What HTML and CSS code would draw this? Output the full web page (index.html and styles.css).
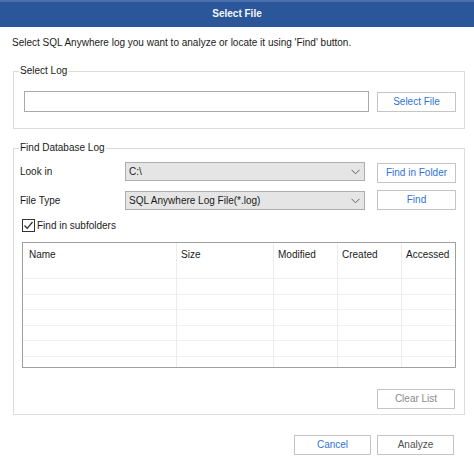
FILE: index.html
```html
<!DOCTYPE html>
<html>
<head>
<meta charset="utf-8">
<link rel="stylesheet" href="styles.css">
</head>
<body>
<div class="dialog">
  <div class="titlebar">Select File</div>
  <div class="intro">Select SQL Anywhere log you want to analyze or locate it using 'Find' button.</div>

  <fieldset class="group group-select">
    <legend>Select Log</legend>
    <div class="row-select">
      <div class="textbox"></div>
      <button class="btn btn-blue btn-select">Select File</button>
    </div>
  </fieldset>

  <fieldset class="group group-find">
    <legend>Find Database Log</legend>
    <div class="form-row row-look">
      <span class="form-label">Look in</span>
      <div class="combo"><span>C:\</span><svg class="chev" width="9" height="6" viewBox="0 0 9 6"><path d="M0.5 0.8 L4.5 4.8 L8.5 0.8" fill="none" stroke="#606060" stroke-width="1"/></svg></div>
      <button class="btn btn-blue btn-side">Find in Folder</button>
    </div>
    <div class="form-row row-type">
      <span class="form-label">File Type</span>
      <div class="combo"><span>SQL Anywhere Log File(*.log)</span><svg class="chev" width="9" height="6" viewBox="0 0 9 6"><path d="M0.5 0.8 L4.5 4.8 L8.5 0.8" fill="none" stroke="#606060" stroke-width="1"/></svg></div>
      <button class="btn btn-blue btn-side">Find</button>
    </div>
    <label class="check-row">
      <span class="checkbox"><svg width="11" height="11" viewBox="0 0 11 11"><path d="M1.5 5.5 L4.2 8.3 L9.5 2" fill="none" stroke="#333" stroke-width="1.3"/></svg></span>
      <span>Find in subfolders</span>
    </label>
    <div class="list">
      <div class="col col-name">
        <div class="head">Name</div>
        <div class="cell"></div><div class="cell"></div><div class="cell"></div><div class="cell"></div><div class="cell"></div><div class="cell"></div>
      </div>
      <div class="col col-size">
        <div class="head">Size</div>
        <div class="cell"></div><div class="cell"></div><div class="cell"></div><div class="cell"></div><div class="cell"></div><div class="cell"></div>
      </div>
      <div class="col col-mod">
        <div class="head">Modified</div>
        <div class="cell"></div><div class="cell"></div><div class="cell"></div><div class="cell"></div><div class="cell"></div><div class="cell"></div>
      </div>
      <div class="col col-cre">
        <div class="head">Created</div>
        <div class="cell"></div><div class="cell"></div><div class="cell"></div><div class="cell"></div><div class="cell"></div><div class="cell"></div>
      </div>
      <div class="col col-acc">
        <div class="head">Accessed</div>
        <div class="cell"></div><div class="cell"></div><div class="cell"></div><div class="cell"></div><div class="cell"></div><div class="cell"></div>
      </div>
    </div>
    <div class="clear-row">
      <button class="btn btn-gray">Clear List</button>
    </div>
  </fieldset>

  <div class="footer">
    <button class="btn btn-blue">Cancel</button>
    <button class="btn btn-dark">Analyze</button>
  </div>
</div>
</body>
</html>
```

FILE: styles.css
```css
* { box-sizing: border-box; }
html, body { margin: 0; padding: 0; background: #ffffff; }
body {
  width: 474px;
  height: 467px;
  overflow: hidden;
  font-family: "Liberation Sans", Arial, sans-serif;
  font-size: 10px;
  color: #1a1a1a;
}
.dialog { width: 474px; height: 467px; }

.titlebar {
  height: 27px;
  background: #2b579a;
  border-top: 2px solid #4a70ad;
  color: #f4f7fb;
  font-weight: bold;
  font-size: 10px;
  text-align: center;
  line-height: 24px;
}

.intro {
  margin: 8px 0 0 12px;
  line-height: 16px;
  height: 16px;
}

.group {
  margin: 0 9px 0 13px;
  border: 1px solid #dcdcdc;
  padding: 0;
  min-width: 0;
}
.group legend {
  padding: 0 1px;
  line-height: 14px;
  color: #1a1a1a;
}

.group-select {
  margin-top: 13px;
  padding: 13px 7px 16px 10px;
}
.group-select legend { margin-left: -5px; }
.row-select {
  display: flex;
  align-items: flex-start;
  gap: 8px;
}
.textbox {
  width: 345px;
  height: 21px;
  border: 1px solid #a9a9a9;
  background: #fff;
}

.btn {
  background: #ffffff;
  border: 1px solid #c4c4c4;
  font-family: inherit;
  font-size: 10px;
  height: 20px;
  padding: 0;
  margin: 0;
  width: 78px;
  text-align: center;
  line-height: 18px;
}
.btn-select { width: 79px; margin-top: 1px; }
.btn-blue { color: #2f73d8; }
.btn-gray { color: #8a8a8a; }
.btn-dark { color: #505050; }

.group-find {
  margin-top: 12px;
  padding: 7px 8px 5px 6px;
}
.group-find legend { margin-left: -1px; }
.form-row {
  display: flex;
  align-items: flex-start;
  height: 20px;
}
.row-type { margin-top: 9px; }
.form-label {
  width: 105px;
  line-height: 19px;
}
.combo {
  width: 240px;
  height: 19px;
  background: #e5e5e5;
  border: 1px solid #adadad;
  display: flex;
  align-items: center;
  justify-content: space-between;
  padding: 0 4px 0 3px;
}
.chev { display: block; }
.btn-side { margin-left: 12px; width: 79px; }
.row-look .btn-side { margin-top: 1px; }
.row-type .btn-side { margin-top: -1px; }

.check-row {
  display: flex;
  align-items: center;
  margin: 7px 0 0 2px;
  height: 14px;
}
.checkbox {
  width: 13px;
  height: 13px;
  border: 1px solid #333333;
  background: #fff;
  display: flex;
  align-items: center;
  justify-content: center;
  margin-right: 2px;
}
.checkbox svg { display: block; }

.list {
  margin: 10px 0 0 2px;
  width: 434px;
  height: 126px;
  border: 1px solid #a0a0a0;
  display: flex;
  overflow: hidden;
}
.col { border-right: 1px solid #ececec; }
.col-name { width: 154px; }
.col-size { width: 97px; }
.col-mod { width: 64px; }
.col-cre { width: 64px; }
.col-acc { flex: 1; border-right: none; }
.head {
  height: 36px;
  padding: 5px 0 0 4px;
  line-height: 14px;
  border-bottom: 1px solid #f0f0f0;
  color: #1a1a1a;
}
.col-name .head { padding-left: 6px; }
.cell {
  height: 15.5px;
  border-bottom: 1px solid #f0f0f0;
}

.clear-row {
  display: flex;
  justify-content: flex-end;
  margin-top: 21px;
  padding-right: 1px;
}
.clear-row .btn { width: 78px; }

.footer {
  display: flex;
  justify-content: flex-end;
  gap: 6px;
  margin-top: 20px;
  padding-right: 20px;
}
.footer .btn { width: 77px; }
```
